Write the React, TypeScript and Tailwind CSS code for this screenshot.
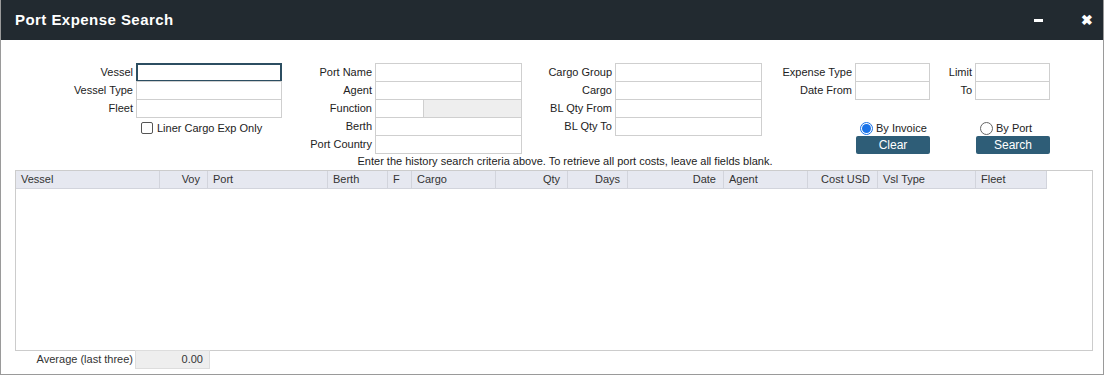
import React from 'react';

const font = { fontFamily: '"Liberation Sans", Arial, sans-serif' };

function Field({ label, labelW, inputW, focused, split }: { label: string; labelW: string; inputW: string; focused?: boolean; split?: boolean }) {
  return (
    <div className="flex items-start h-[18px]">
      <div className={`${labelW} text-right pr-[3px] text-[11px] leading-[18px] text-[#222]`}>{label}</div>
      {split ? (
        <div className={`flex ${inputW} h-[19px]`}>
          <input className="w-[49px] min-w-0 h-[19px] border border-[#cfcfcf] bg-white outline-none" />
          <input disabled className="w-0 min-w-0 flex-1 h-[19px] border border-l-0 border-[#cfcfcf] bg-[#eeeeee] outline-none" />
        </div>
      ) : (
        <input
          className={`${inputW} min-w-0 h-[19px] outline-none bg-white ${focused ? 'border-2 border-[#2c4e61]' : 'border border-[#cfcfcf]'}`}
        />
      )}
    </div>
  );
}

const cols = [
  { name: 'Vessel', w: 'w-[144px]', right: false },
  { name: 'Voy', w: 'w-[48px]', right: true },
  { name: 'Port', w: 'w-[120px]', right: false },
  { name: 'Berth', w: 'w-[60px]', right: false },
  { name: 'F', w: 'w-[24px]', right: false },
  { name: 'Cargo', w: 'w-[84px]', right: false },
  { name: 'Qty', w: 'w-[72px]', right: true },
  { name: 'Days', w: 'w-[60px]', right: true },
  { name: 'Date', w: 'w-[96px]', right: true },
  { name: 'Agent', w: 'w-[84px]', right: false },
  { name: 'Cost USD', w: 'w-[70px]', right: true },
  { name: 'Vsl Type', w: 'w-[98px]', right: false },
  { name: 'Fleet', w: 'w-[71px]', right: false },
];

export default function App() {
  return (
    <div className="w-[1107px] h-[376px] bg-white overflow-hidden" style={font}>
      <div className="w-[1104px] h-[375px] border-l border-r border-b border-[#9a9a9a] flex flex-col">
        {/* title bar */}
        <div className="h-[40px] bg-[#222a30] flex items-center pl-[14px] pr-[10px]">
          <div className="text-white text-[15px] font-bold tracking-[0.45px]">Port Expense Search</div>
          <div className="flex-1" />
          <div className="w-[9px] h-[3px] bg-white mr-[38px]" />
          <div className="text-white text-[14px] font-bold leading-none">✖</div>
        </div>

        {/* form */}
        <div className="flex pt-[23px] h-[113px]">
          <div className="flex flex-col">
            <Field label="Vessel" labelW="w-[135px]" inputW="w-[146px]" focused />
            <Field label="Vessel Type" labelW="w-[135px]" inputW="w-[146px]" />
            <Field label="Fleet" labelW="w-[135px]" inputW="w-[146px]" />
            <label className="flex items-center h-[18px] pl-[140px] mt-[2px] text-[11px] text-[#222]">
              <span className="w-[12px] h-[12px] border border-[#555] rounded-[2px] bg-white mr-[4px]" />
              Liner Cargo Exp Only
            </label>
          </div>
          <div className="flex flex-col">
            <Field label="Port Name" labelW="w-[93px]" inputW="w-[147px]" />
            <Field label="Agent" labelW="w-[93px]" inputW="w-[147px]" />
            <Field label="Function" labelW="w-[93px]" inputW="w-[147px]" split />
            <Field label="Berth" labelW="w-[93px]" inputW="w-[147px]" />
            <Field label="Port Country" labelW="w-[93px]" inputW="w-[147px]" />
          </div>
          <div className="flex flex-col">
            <Field label="Cargo Group" labelW="w-[93px]" inputW="w-[147px]" />
            <Field label="Cargo" labelW="w-[93px]" inputW="w-[147px]" />
            <Field label="BL Qty From" labelW="w-[93px]" inputW="w-[147px]" />
            <Field label="BL Qty To" labelW="w-[93px]" inputW="w-[147px]" />
          </div>
          <div className="flex flex-col">
            <div className="flex">
              <div className="flex flex-col">
                <Field label="Expense Type" labelW="w-[93px]" inputW="w-[75px]" />
                <Field label="Date From" labelW="w-[93px]" inputW="w-[75px]" />
              </div>
              <div className="flex flex-col">
                <Field label="Limit" labelW="w-[45px]" inputW="w-[75px]" />
                <Field label="To" labelW="w-[45px]" inputW="w-[75px]" />
              </div>
            </div>
            <div className="flex mt-[21px]">
              <div className="w-[74px] ml-[94px] flex flex-col">
                <label className="flex items-center h-[16px] pl-[4px] text-[11px] text-[#222]">
                  <span className="w-[13px] h-[13px] rounded-full border border-[#1a73e8] bg-white flex items-center justify-center mr-[3px]">
                    <span className="w-[9px] h-[9px] rounded-full bg-[#1a73e8]" />
                  </span>
                  By Invoice
                </label>
                <button className="h-[18px] w-[74px] rounded-[2px] bg-[#2e5d77] text-white text-[12px] leading-[18px]">Clear</button>
              </div>
              <div className="w-[74px] ml-[46px] flex flex-col">
                <label className="flex items-center h-[16px] pl-[4px] text-[11px] text-[#222]">
                  <span className="w-[13px] h-[13px] rounded-full border border-[#666] bg-white mr-[3px]" />
                  By Port
                </label>
                <button className="h-[18px] w-[74px] rounded-[2px] bg-[#2e5d77] text-white text-[12px] leading-[18px]">Search</button>
              </div>
            </div>
          </div>
        </div>

        {/* hint */}
        <div className="h-[17px] pl-[26px] text-center text-[11px] leading-[16px] text-[#222]">
          Enter the history search criteria above. To retrieve all port costs, leave all fields blank.
        </div>

        {/* grid */}
        <div className="ml-[14px] w-[1078px] h-[181px] border border-[#cccccc] bg-white">
          <div className="flex h-[18px]">
            {cols.map((c) => (
              <div
                key={c.name}
                className={`${c.w} h-[18px] bg-[#e6e8f0] border-r border-b border-[#d2d4dc] text-[11px] leading-[17px] text-[#333] px-[5px] ${c.right ? 'text-right pr-[7px]' : 'text-left'}`}
              >
                {c.name}
              </div>
            ))}
          </div>
        </div>

        {/* footer */}
        <div className="flex items-center h-[19px] mt-[-1px]">
          <div className="w-[134px] text-right pr-[2px] text-[11px] text-[#333]">Average (last three)</div>
          <div className="w-[75px] h-[19px] bg-[#eeeeee] border border-[#dddddd] text-right pr-[6px] text-[11px] leading-[17px] text-[#333]">0.00</div>
        </div>
      </div>
    </div>
  );
}
